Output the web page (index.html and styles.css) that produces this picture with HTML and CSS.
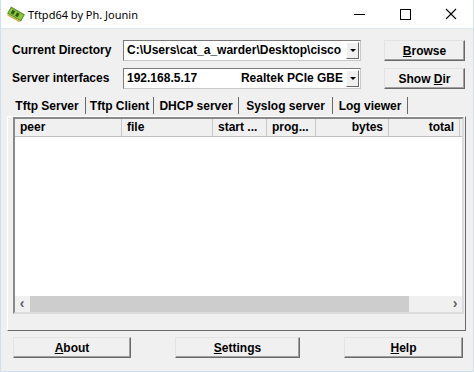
FILE: index.html
```html
<!DOCTYPE html>
<html lang="en">
<head>
  <meta charset="UTF-8">
  <title>Tftpd64 by Ph. Jounin</title>
  <link rel="stylesheet" href="styles.css">
</head>
<body>
  <div class="window">
    <div class="titlebar">
      <svg class="app-icon" width="18" height="16" viewBox="0 0 18 16">
        <g transform="rotate(30 9 8)">
          <rect x="1" y="4" width="16" height="8" fill="#5f8f2a"/>
          <rect x="2" y="5" width="14" height="6" fill="#8cc63f"/>
          <rect x="4" y="6" width="3" height="4" fill="#2f5a12"/>
          <rect x="9" y="6" width="3" height="4" fill="#2f5a12"/>
          <rect x="2" y="12" width="14" height="1.5" fill="#c8b040"/>
        </g>
      </svg>
      <span class="title">Tftpd64 by Ph. Jounin</span>
      <div class="controls">
        <svg width="46" height="28" viewBox="0 0 46 28"><path d="M18 14.5h11" stroke="#000" stroke-width="1"/></svg>
        <svg width="46" height="28" viewBox="0 0 46 28"><rect x="18.5" y="9.5" width="10" height="10" fill="none" stroke="#000" stroke-width="1"/></svg>
        <svg width="46" height="28" viewBox="0 0 46 28"><path d="M18 9l10 10M28 9l-10 10" stroke="#000" stroke-width="1.1"/></svg>
      </div>
    </div>

    <div class="client">
      <div class="field-row">
        <span class="label">Current Directory</span>
        <div class="combo">
          <span class="combo-text">C:\Users\cat_a_warder\Desktop\cisco</span>
          <span class="combo-arrow"></span>
        </div>
        <button class="btn side-btn"><u>B</u>rowse</button>
      </div>
      <div class="field-row">
        <span class="label">Server interfaces</span>
        <div class="combo">
          <span class="combo-text">192.168.5.17</span>
          <span class="combo-text nic">Realtek PCIe GBE</span>
          <span class="combo-arrow"></span>
        </div>
        <button class="btn side-btn">Show <u>D</u>ir</button>
      </div>

      <div class="tabs">
        <span class="tab t-server">Tftp Server</span>
        <span class="tab t-client">Tftp Client</span>
        <span class="tab t-dhcp">DHCP server</span>
        <span class="tab t-syslog">Syslog server</span>
        <span class="tab t-log">Log viewer</span>
      </div>

      <div class="panel">
        <div class="list">
          <div class="list-head">
            <span class="col c-peer">peer</span>
            <span class="col c-file">file</span>
            <span class="col c-start">start ...</span>
            <span class="col c-prog">prog...</span>
            <span class="col c-bytes num">bytes</span>
            <span class="col c-total num">total</span>
          </div>
          <div class="list-body"></div>
          <div class="hscroll">
            <span class="sb-arrow">&lsaquo;</span>
            <div class="sb-track"><div class="sb-thumb"></div></div>
            <span class="sb-arrow">&rsaquo;</span>
          </div>
        </div>
      </div>

      <div class="bottom-row">
        <button class="btn b-about"><u>A</u>bout</button>
        <button class="btn b-settings"><u>S</u>ettings</button>
        <button class="btn b-help"><u>H</u>elp</button>
      </div>
    </div>
  </div>
</body>
</html>
```

FILE: styles.css
```css
html, body {
  margin: 0;
  padding: 0;
  background: #fff;
}
.window {
  width: 474px;
  height: 372px;
  box-sizing: border-box;
  display: flex;
  flex-direction: column;
  border-left: 1px solid #cfe0f1;
  border-right: 1px solid #cfe0f1;
  border-bottom: 1px solid #cfe0f1;
}
.titlebar {
  height: 28px;
  display: flex;
  align-items: center;
  background: #fff;
  border-bottom: 1px solid #dde7f1;
}
.app-icon {
  margin-left: 6px;
  margin-right: 3px;
}
.title {
  font-family: "Noto Sans", "Open Sans", sans-serif;
  font-size: 11px;
  color: #000;
}
.controls {
  margin-left: auto;
  display: flex;
  margin-right: -1px;
}
.client {
  flex: 1;
  background: #f0f0f0;
  font-family: "Liberation Sans", Arial, sans-serif;
  font-weight: bold;
  font-size: 12px;
  color: #000;
  padding: 10px 0 0 11px;
  display: flex;
  flex-direction: column;
}
.field-row {
  display: flex;
  align-items: center;
  height: 22px;
  margin-bottom: 6px;
}
.label {
  width: 111px;
}
.combo {
  width: 238px;
  height: 21px;
  box-sizing: border-box;
  background: #fff;
  border: 1px solid #7a7a7a;
  border-right-color: #c8c8c8;
  border-bottom-color: #c8c8c8;
  display: flex;
  align-items: center;
  padding-left: 3px;
}
.combo-text {
  white-space: nowrap;
  overflow: hidden;
}
.combo-text.nic {
  margin-left: auto;
  margin-right: 3px;
}
.combo-arrow {
  width: 13px;
  height: 17px;
  margin-left: auto;
  margin-right: 1px;
  flex-shrink: 0;
  box-sizing: border-box;
  background: #f0f0f0;
  border-left: 1px solid #fff;
  border-top: 1px solid #fff;
  border-right: 1px solid #696969;
  border-bottom: 1px solid #696969;
  position: relative;
}
.combo-text.nic + .combo-arrow {
  margin-left: 0;
}
.combo-arrow::after {
  content: "";
  position: absolute;
  left: 3px;
  top: 6px;
  border-left: 3px solid transparent;
  border-right: 3px solid transparent;
  border-top: 3px solid #000;
}
.btn {
  font-family: "Liberation Sans", Arial, sans-serif;
  font-weight: bold;
  font-size: 12px;
  color: #000;
  background: #f0f0f0;
  box-sizing: border-box;
  border: 1px solid #e3e3e3;
  border-right-color: #696969;
  border-bottom-color: #696969;
  box-shadow: inset -1px -1px 0 #a0a0a0;
  padding: 0;
  height: 21px;
}
.side-btn {
  width: 81px;
  margin-left: 23px;
  margin-top: 1px;
}
.tabs {
  display: flex;
  height: 21px;
  align-items: stretch;
  margin-left: -3px;
}
.tab {
  display: flex;
  align-items: center;
  justify-content: center;
  box-sizing: border-box;
  border-right: 1px solid #696969;
  margin-top: 2px;
  margin-bottom: 2px;
  white-space: nowrap;
}
.t-server { width: 77px; }
.t-client { width: 68px; }
.t-dhcp { width: 85px; }
.t-syslog { width: 94px; }
.t-log { width: 75px; }
.panel {
  margin-left: -5px;
  width: 459px;
  height: 215px;
  box-sizing: border-box;
  border-top: 1px solid #fff;
  border-left: 1px solid #fff;
  border-right: 1px solid #696969;
  border-bottom: 1px solid #696969;
  padding: 0 1px 0 5px;
}
.list {
  height: 197px;
  box-sizing: border-box;
  background: #fff;
  border: 2px solid #8a8a8a;
  border-right-color: #dcdcdc;
  border-bottom-color: #dcdcdc;
  display: flex;
  flex-direction: column;
}
.list-head {
  display: flex;
  height: 17px;
  background: #f0f0f0;
  border-bottom: 1px solid #c0c0c0;
}
.col {
  box-sizing: border-box;
  padding: 0 5px;
  line-height: 17px;
  border-right: 1px solid #c8c8c8;
  white-space: nowrap;
}
.col.num {
  text-align: right;
}
.c-peer { width: 107px; }
.c-file { width: 91px; }
.c-start { width: 54px; }
.c-prog { width: 49px; }
.c-bytes { width: 73px; }
.c-total { width: 71px; }
.list-body {
  flex: 1;
}
.hscroll {
  display: flex;
  height: 16px;
  background: #f0f0f0;
}
.sb-arrow {
  width: 14px;
  text-align: center;
  line-height: 15px;
  font-size: 14px;
  color: #606060;
}
.sb-track {
  flex: 1;
  display: flex;
}
.sb-thumb {
  width: 379px;
  margin-left: 1px;
  background: #cdcdcd;
}
.bottom-row {
  display: flex;
  margin-top: 6px;
  margin-left: 1px;
  gap: 44px;
}
.b-about { width: 118px; }
.b-settings { width: 125px; }
.b-help { width: 119px; }
```
